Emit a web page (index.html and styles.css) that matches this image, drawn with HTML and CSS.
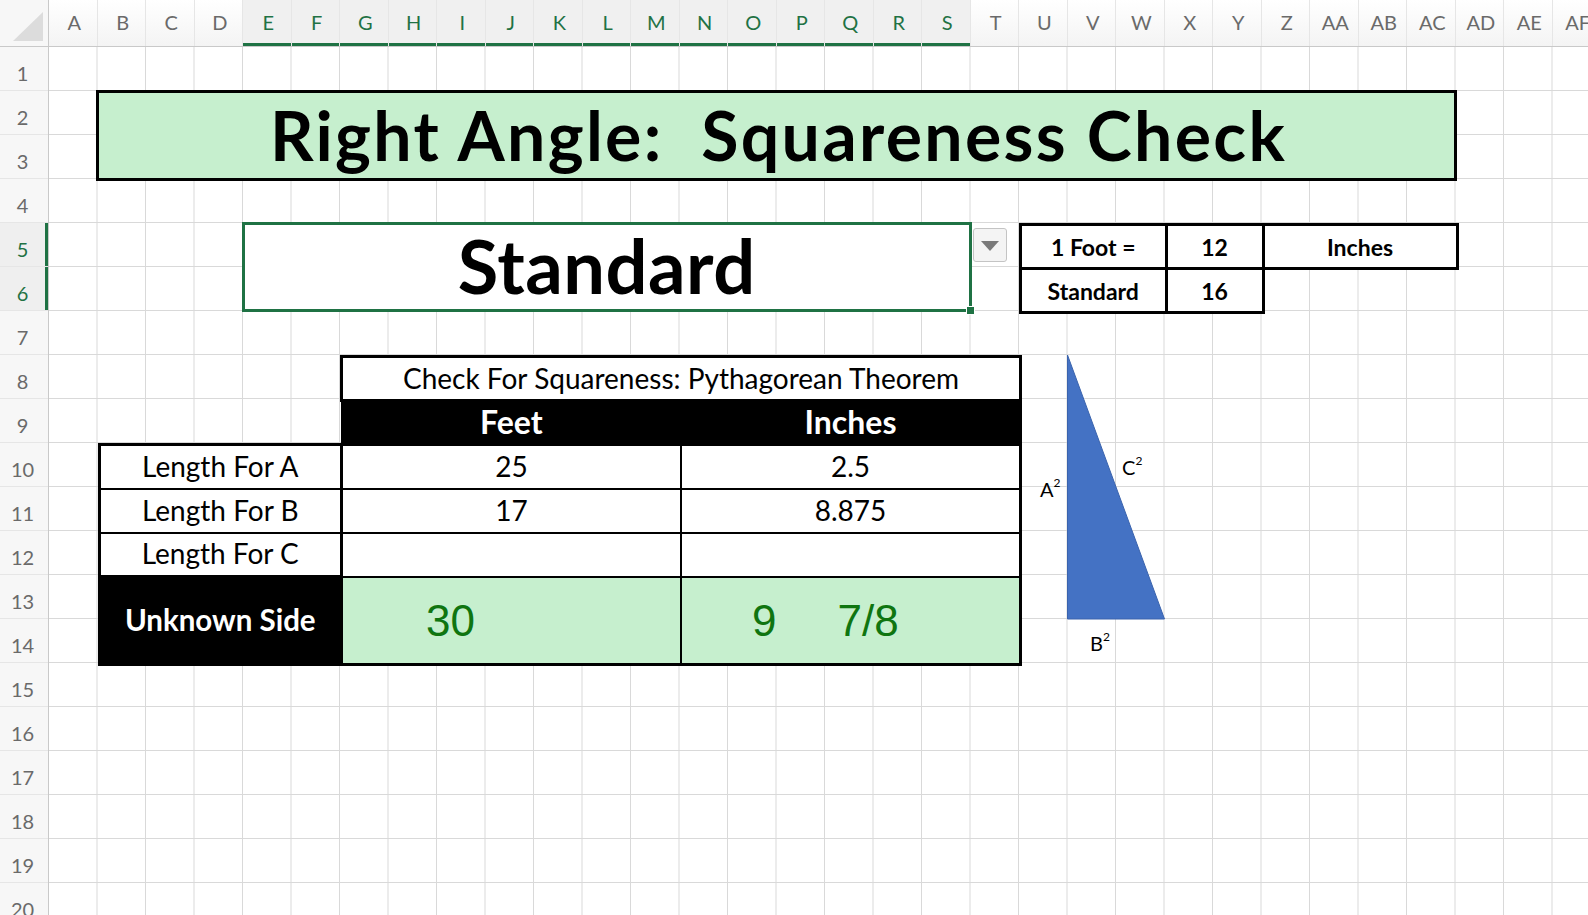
FILE: index.html
```html
<!DOCTYPE html>
<html lang="en">
<head>
    <meta charset="UTF-8">
    <meta name="viewport" content="width=device-width, initial-scale=1.0">
    <title>Right Angle: Squareness Check</title>
    <link rel="stylesheet" href="styles.css">
</head>
<body>

    <div class="sheet">
        <!-- Cabeceras -->
        <div class="corner"><span class="corner-mark"></span></div>

        <div class="col-heads">
            <div class="col-head">A</div>
            <div class="col-head">B</div>
            <div class="col-head">C</div>
            <div class="col-head">D</div>
            <div class="col-head sel">E</div>
            <div class="col-head sel">F</div>
            <div class="col-head sel">G</div>
            <div class="col-head sel">H</div>
            <div class="col-head sel">I</div>
            <div class="col-head sel">J</div>
            <div class="col-head sel">K</div>
            <div class="col-head sel">L</div>
            <div class="col-head sel">M</div>
            <div class="col-head sel">N</div>
            <div class="col-head sel">O</div>
            <div class="col-head sel">P</div>
            <div class="col-head sel">Q</div>
            <div class="col-head sel">R</div>
            <div class="col-head sel">S</div>
            <div class="col-head">T</div>
            <div class="col-head">U</div>
            <div class="col-head">V</div>
            <div class="col-head">W</div>
            <div class="col-head">X</div>
            <div class="col-head">Y</div>
            <div class="col-head">Z</div>
            <div class="col-head">AA</div>
            <div class="col-head">AB</div>
            <div class="col-head">AC</div>
            <div class="col-head">AD</div>
            <div class="col-head">AE</div>
            <div class="col-head">AF</div>
        </div>

        <div class="row-heads">
            <div class="row-head">1</div>
            <div class="row-head">2</div>
            <div class="row-head">3</div>
            <div class="row-head">4</div>
            <div class="row-head sel">5</div>
            <div class="row-head sel">6</div>
            <div class="row-head">7</div>
            <div class="row-head">8</div>
            <div class="row-head">9</div>
            <div class="row-head">10</div>
            <div class="row-head">11</div>
            <div class="row-head">12</div>
            <div class="row-head">13</div>
            <div class="row-head">14</div>
            <div class="row-head">15</div>
            <div class="row-head">16</div>
            <div class="row-head">17</div>
            <div class="row-head">18</div>
            <div class="row-head">19</div>
            <div class="row-head">20</div>
        </div>

        <!-- Cuadricula de celdas -->
        <div class="cells"></div>

        <!-- Titulo -->
        <div class="title">Right Angle:  Squareness Check</div>

        <!-- Celda seleccionada con lista desplegable -->
        <div class="picker">
            Standard
            <span class="fill-handle"></span>
        </div>
        <div class="dropdown"><span class="dropdown-arrow"></span></div>

        <!-- Tabla de unidades -->
        <div class="units">
            <table class="units-table">
                <colgroup>
                    <col class="w3">
                    <col class="w2">
                    <col class="w4">
                </colgroup>
                <tr>
                    <td>1 Foot =</td>
                    <td>12</td>
                    <td>Inches</td>
                </tr>
                <tr>
                    <td>Standard</td>
                    <td>16</td>
                    <td class="blank"></td>
                </tr>
            </table>
        </div>

        <!-- Tabla principal -->
        <div class="check">
            <table class="check-table">
                <colgroup>
                    <col class="w5">
                    <col class="w7">
                    <col class="w7">
                </colgroup>
                <tr>
                    <td class="blank"></td>
                    <td class="caption" colspan="2">Check For Squareness: Pythagorean Theorem</td>
                </tr>
                <tr>
                    <td class="blank"></td>
                    <td class="head">Feet</td>
                    <td class="head">Inches</td>
                </tr>
                <tr>
                    <td class="label">Length For A</td>
                    <td>25</td>
                    <td>2.5</td>
                </tr>
                <tr>
                    <td class="label">Length For B</td>
                    <td>17</td>
                    <td>8.875</td>
                </tr>
                <tr>
                    <td class="label">Length For C</td>
                    <td></td>
                    <td></td>
                </tr>
                <tr class="result-row">
                    <td class="result-label">Unknown Side</td>
                    <td class="result feet-result"><span>30</span></td>
                    <td class="result inch-result"><span>9</span><span class="frac">7/8</span></td>
                </tr>
            </table>
        </div>

        <!-- Diagrama del triangulo -->
        <div class="diagram">
            <svg class="triangle" width="194" height="308" viewBox="0 0 194 308">
                <polygon points="48.5,0 48.5,264 145.5,264" fill="#4472c4" stroke="#3a63ad" stroke-width="1"/>
                <text x="21" y="142">A<tspan class="sup" dy="-10">2</tspan></text>
                <text x="103" y="120">C<tspan class="sup" dy="-10">2</tspan></text>
                <text x="71" y="296">B<tspan class="sup" dy="-10">2</tspan></text>
            </svg>
        </div>
    </div>

</body>
</html>
```

FILE: styles.css
```css
/* Reset */
* {
    margin: 0;
    padding: 0;
    box-sizing: border-box;
}

body {
    font-family: Lato, "Open Sans", sans-serif;
    background: #fff;
    overflow: hidden;
}

/* Hoja: cabecera de filas + 32 columnas */
.sheet {
    display: grid;
    grid-template-columns: 49px repeat(32, 48.5px);
    grid-template-rows: 47px repeat(20, 44px);
    width: 1601px;
    height: 927px;
}

/* Esquina superior izquierda */
.corner {
    grid-column: 1;
    grid-row: 1;
    background: #f7f7f7;
    border-right: 1px solid #c9c9c9;
    border-bottom: 1px solid #c9c9c9;
    position: relative;
}

.corner-mark {
    position: absolute;
    right: 5px;
    bottom: 5px;
    width: 0;
    height: 0;
    border-left: 30px solid transparent;
    border-bottom: 29px solid #dcdcdc;
}

/* Cabeceras de columna */
.col-heads {
    grid-column: 2 / -1;
    grid-row: 1;
    display: grid;
    grid-template-columns: repeat(32, 48.5px);
    background: linear-gradient(#ffffff, #f4f4f4);
    border-bottom: 1px solid #c9c9c9;
}

.col-head {
    display: flex;
    align-items: center;
    justify-content: center;
    font-size: 20px;
    color: #6a6a6a;
    border-right: 1px solid #e6e6e6;
    padding: 0 0 2px 3px;
}

.col-head.sel {
    background: #f0f0f0;
    color: #1f7244;
    box-shadow: inset 0 -3px 0 #1f7244;
}

/* Cabeceras de fila */
.row-heads {
    grid-column: 1;
    grid-row: 2 / -1;
    display: grid;
    grid-template-rows: repeat(20, 44px);
    background: #f7f7f7;
    border-right: 1px solid #c9c9c9;
}

.row-head {
    display: flex;
    align-items: center;
    justify-content: center;
    font-size: 20px;
    color: #6a6a6a;
    border-bottom: 1px solid #e6e6e6;
    padding: 8px 3px 0 0;
}

.row-head.sel {
    background: #efefef;
    color: #1f7244;
    box-shadow: inset -3px 0 0 #1f7244;
}

/* Lineas de la cuadricula */
.cells {
    grid-column: 2 / -1;
    grid-row: 2 / -1;
    background-image:
        linear-gradient(to right, #d9d9d9 1px, transparent 1px),
        linear-gradient(to bottom, #d9d9d9 1px, transparent 1px);
    background-size: 48.5px 44px;
    background-position: -1px -1px;
}

/* Titulo B2:AC3 */
.title {
    grid-column: 3 / 31;
    grid-row: 3 / 5;
    margin: -1.5px;
    background: #c6efce;
    border: 3px solid #000;
    display: flex;
    align-items: center;
    justify-content: center;
    white-space: pre;
    font-weight: 700;
    font-size: 68px;
    letter-spacing: 2.3px;
    color: #000;
    padding: 0 0 2px 4px;
}

/* Celda seleccionada E5:S6 */
.picker {
    grid-column: 6 / 21;
    grid-row: 6 / 8;
    margin: -1px;
    background: #fff;
    border: 3px solid #1f7244;
    display: flex;
    align-items: center;
    justify-content: center;
    font-weight: 700;
    font-size: 74px;
    letter-spacing: 0.5px;
    color: #000;
    position: relative;
    padding-bottom: 4px;
}

.fill-handle {
    position: absolute;
    right: -6px;
    bottom: -6px;
    width: 9px;
    height: 9px;
    background: #1f7244;
    border: 1px solid #fff;
}

.dropdown {
    grid-column: 21;
    grid-row: 6;
    align-self: start;
    width: 34px;
    height: 34px;
    margin: 5px 0 0 2px;
    background: #f4f4f4;
    border: 1px solid #c4c4c4;
    border-radius: 3px;
    display: flex;
    align-items: center;
    justify-content: center;
}

.dropdown-arrow {
    width: 0;
    height: 0;
    border-left: 9px solid transparent;
    border-right: 9px solid transparent;
    border-top: 10px solid #7a7a7a;
    margin-top: 2px;
}

/* Anchos de columna (multiplos de 48.5px) */
.w2 { width: 97px; }
.w3 { width: 145.5px; }
.w4 { width: 194px; }
.w5 { width: 242.5px; }
.w7 { width: 339.5px; }

/* Tabla de unidades U5:AC6 */
.units {
    grid-column: 22 / 31;
    grid-row: 6 / 8;
}

.units-table {
    border-collapse: collapse;
    table-layout: fixed;
    width: 100%;
    height: 100%;
}

.units-table td {
    border: 3px solid #000;
    text-align: center;
    font-weight: 700;
    font-size: 23px;
    color: #000;
    height: 44px;
    background: #fff;
}

.units-table td.blank {
    border: none;
    background: transparent;
}

/* Tabla principal B8:T14 */
.check {
    grid-column: 3 / 22;
    grid-row: 9 / 16;
}

.check-table {
    border-collapse: collapse;
    table-layout: fixed;
    width: 100%;
    height: 100%;
}

.check-table td {
    border: 2px solid #000;
    text-align: center;
    font-size: 28px;
    color: #000;
    height: 44px;
    background: #fff;
    padding-bottom: 2px;
}

.check-table td.blank {
    border: none;
    background: transparent;
}

.check-table td.caption {
    border: 3px solid #000;
}

.check-table td.head {
    background: #000;
    color: #fff;
    font-weight: 700;
    font-size: 32px;
}

.check-table td.label {
    border-left: 3px solid #000;
    border-right: 3px solid #000;
}

.check-table tr:nth-child(3) td.label {
    border-top: 3px solid #000;
}

.check-table td:last-child {
    border-right: 3px solid #000;
}

.result-row td {
    height: 88px;
    border-bottom: 3px solid #000;
}

.check-table td.result-label {
    background: #000;
    color: #fff;
    font-weight: 700;
    font-size: 29.5px;
    border: 3px solid #000;
}

.check-table td.result {
    background: #c6efce;
    color: #0f7510;
    font-family: "Liberation Sans", Arial, sans-serif;
    font-size: 44px;
    text-align: left;
    padding-top: 4px;
}

.feet-result {
    padding-left: 83px;
}

.inch-result {
    padding-left: 70px;
}

.frac {
    margin-left: 61px;
}

/* Diagrama U8:X14 */
.diagram {
    grid-column: 22 / 26;
    grid-row: 9 / 16;
}

.triangle {
    display: block;
    overflow: visible;
}

.triangle text {
    font-family: Lato, sans-serif;
    font-size: 20px;
    fill: #000;
}

.triangle .sup {
    font-size: 12px;
}
```
